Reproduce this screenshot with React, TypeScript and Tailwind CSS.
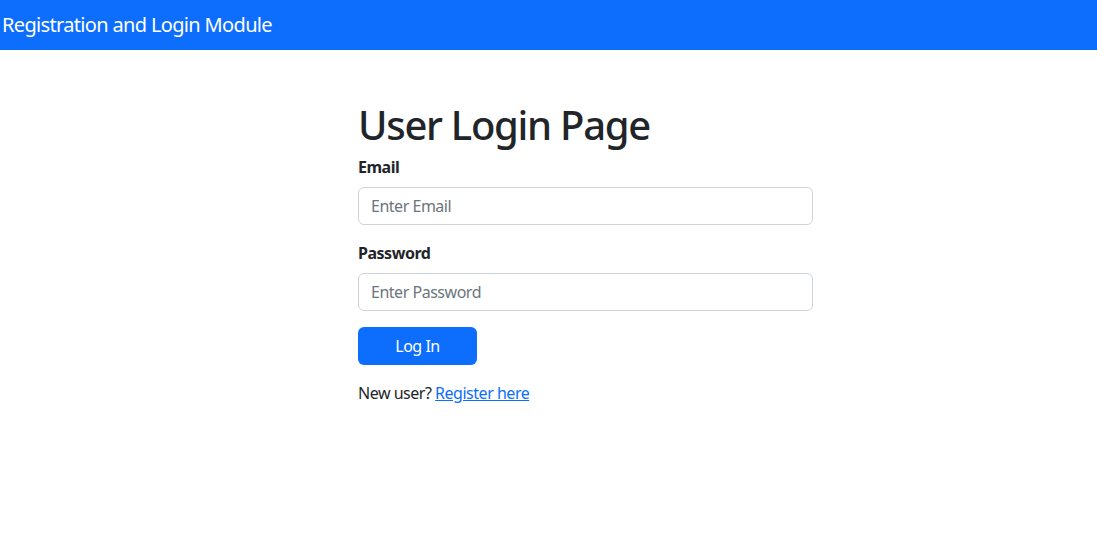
export default function App() {
  return (
    <div className="min-h-screen bg-white text-[#212529] tracking-[-0.03em]" style={{ fontFamily: '"Noto Sans", "Open Sans", sans-serif' }}>
      <nav className="h-[50px] bg-[#0d6efd] flex items-center">
        <span className="text-white text-[20px] leading-[30px] pl-[2px] -mt-[1px] tracking-[-0.033em]">Registration and Login Module</span>
      </nav>
      <div className="ml-[358px] w-[455px] pt-[51px]">
        <h1 className="text-[40px] leading-[48px] font-medium mb-[6px] tracking-[-0.032em]">User Login Page</h1>
        <div className="mb-4">
          <label className="block font-bold text-[16px] leading-6 mb-2">Email</label>
          <input
            type="email"
            placeholder="Enter Email"
            className="block w-full h-[38px] border border-[#ced4da] rounded-[6px] px-3 text-[16px] placeholder:text-[#6c757d] outline-none"
          />
        </div>
        <div className="mb-4">
          <label className="block font-bold text-[16px] leading-6 mb-2">Password</label>
          <input
            type="password"
            placeholder="Enter Password"
            className="block w-full h-[38px] border border-[#ced4da] rounded-[6px] px-3 text-[16px] placeholder:text-[#6c757d] outline-none"
          />
        </div>
        <button className="w-[119px] h-[38px] bg-[#0d6efd] text-white text-[16px] rounded-[6px]">Log In</button>
        <p className="mt-4 text-[16px] leading-6">
          New user? <a href="#" className="text-[#0d6efd] underline">Register here</a>
        </p>
      </div>
    </div>
  );
}
